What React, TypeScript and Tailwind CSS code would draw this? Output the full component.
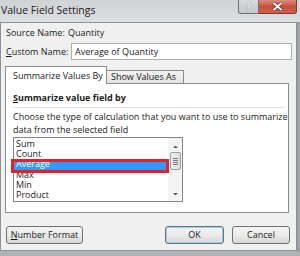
import React from "react";

const items = ["Sum", "Count", "Average", "Max", "Min", "Product"];

const Btn: React.FC<{ className?: string; children: React.ReactNode }> = ({
  className = "",
  children,
}) => (
  <div
    className={`flex h-[18px] items-center justify-center rounded-[3px] border border-[#707070] bg-gradient-to-b from-[#f2f2f2] via-[#ebebeb] to-[#d6d6d6] text-[9px] ${className}`}
  >
    {children}
  </div>
);

const App: React.FC = () => {
  return (
    <div className="flex h-[256px] w-[300px] flex-col overflow-hidden bg-[#b4b8bd] font-['Open_Sans',sans-serif] text-[9px] text-[#1b1b1b]">
      {/* title bar */}
      <div className="flex h-[22px] shrink-0 bg-gradient-to-b from-[#d0d3d6] to-[#dcdee0]">
        <div className="flex-1 pl-[1px] pt-[3px] text-[10.5px] leading-[14px] text-[#222]">
          Value Field Settings
        </div>
        <div className="flex h-[14px] pr-[3px]">
          <div className="flex w-[21px] items-center justify-center rounded-bl-[3px] border border-t-0 border-[#6d7177] bg-gradient-to-b from-[#d8dadd] to-[#c4c7cb] text-[10px] font-bold leading-none text-[#f4f4f4] [text-shadow:0_0_1px_#555]">
            ?
          </div>
          <div className="flex w-[38px] items-center justify-center rounded-br-[3px] border border-l-0 border-t-0 border-[#7a3a35] bg-gradient-to-b from-[#d98c80] via-[#c8503f] to-[#d0604f]">
            <svg width="11" height="9" viewBox="0 0 11 9">
              <path
                d="M1.5 1 L9.5 8 M9.5 1 L1.5 8"
                stroke="#4a2a27"
                strokeWidth="3.2"
              />
              <path
                d="M1.5 1 L9.5 8 M9.5 1 L1.5 8"
                stroke="#fff"
                strokeWidth="1.8"
              />
            </svg>
          </div>
        </div>
      </div>

      <div className="flex flex-1">
        {/* client area */}
        <div className="flex h-[229px] w-[297px] flex-col border border-t border-[#8d9196] bg-[#f0f0f0] pl-[4px]">
          <div className="mt-[3px] flex h-[13px] items-center leading-[13px]">
            <span className="w-[63px] pl-[1px]">Source Name:</span>
            <span>Quantity</span>
          </div>
          <div className="mt-[4px] flex h-[17px] items-center">
            <span className="w-[66px] pl-[1px]">
              <span className="underline">C</span>ustom Name:
            </span>
            <div className="flex h-[17px] w-[221px] items-center border border-[#abadb3] bg-white pl-[3px]">
              Average of Quantity
            </div>
          </div>

          {/* tabs */}
          <div className="mt-[6px] flex h-[17px] items-start">
            <div className="relative z-10 flex h-[18px] w-[102px] items-center border border-b-0 border-[#898c95] bg-white pl-[7px]">
              Summarize Values By
            </div>
            <div className="mt-[4px] flex h-[13px] w-[77px] items-center border border-b-0 border-l-0 border-[#898c95] bg-gradient-to-b from-[#f2f2f2] to-[#e3e3e3] pl-[4px]">
              Show Values As
            </div>
          </div>
          <div className="flex h-[130px] w-[284px] flex-col border border-[#898c95] bg-white pl-[7px]">
            <div className="mt-[7px] h-[13px] font-bold leading-[13px]">
              <span className="underline">S</span>ummarize value field by
            </div>
            <div className="mr-[3px] mt-[3px] h-px bg-[#dfe5ec]" />
            <div className="mt-[2px] leading-[13px]">
              Choose the type of calculation that you want to use to summarize
              <br />
              data from the selected field
            </div>
            <div className="relative mt-[1px] flex h-[65px] w-[170px] border border-[#828790] bg-white">
              <div className="flex-1 pt-[1px]">
                {items.map((it) => (
                  <div
                    key={it}
                    className={`h-[10.2px] pl-[2px] leading-[10.2px] ${
                      it === "Average" ? "bg-[#3399ff] text-white" : ""
                    }`}
                  >
                    {it}
                  </div>
                ))}
              </div>
              {/* scrollbar */}
              <div className="flex w-[14px] flex-col items-center bg-[#f4f4f4]">
                <svg width="7" height="5" viewBox="0 0 7 5" className="mt-[6px]">
                  <path d="M1 4 L3.5 1.5 L6 4 Z" fill="#5a5a5a" />
                </svg>
                <div className="mt-[3px] flex h-[18px] w-[11px] flex-col items-center justify-center gap-[1px] rounded-[2px] border border-[#9b9ea3] bg-gradient-to-r from-[#f0f0f0] to-[#dcdcdc]">
                  <div className="h-px w-[5px] bg-[#7a7a7a]" />
                  <div className="h-px w-[5px] bg-[#7a7a7a]" />
                  <div className="h-px w-[5px] bg-[#7a7a7a]" />
                  <div className="h-px w-[5px] bg-[#7a7a7a]" />
                </div>
                <div className="flex-1" />
                <svg width="7" height="5" viewBox="0 0 7 5" className="mb-[4px]">
                  <path d="M1 1 L3.5 3.5 L6 1 Z" fill="#5a5a5a" />
                </svg>
              </div>
              {/* red annotation box */}
              <div className="absolute left-[-3px] top-[21px] h-[14px] w-[158px] border-[3px] border-[#e3202c]" />
            </div>
          </div>

          {/* buttons */}
          <div className="mt-[13px] flex items-center">
            <Btn className="ml-[1px] w-[77px]">
              <span>
                <span className="underline">N</span>umber Format
              </span>
            </Btn>
            <div className="flex-1" />
            <Btn className="w-[59px] border-[#3c7fb1] shadow-[inset_0_0_0_1px_#8ed3f5]">OK</Btn>
            <Btn className="ml-[8px] mr-[6px] w-[58px]">Cancel</Btn>
          </div>
        </div>
        <div className="flex-1 bg-[#9fa3a8]" />
      </div>
      <div className="h-[4px] shrink-0 bg-[#aeb1b5]" />
    </div>
  );
};

export default App;
